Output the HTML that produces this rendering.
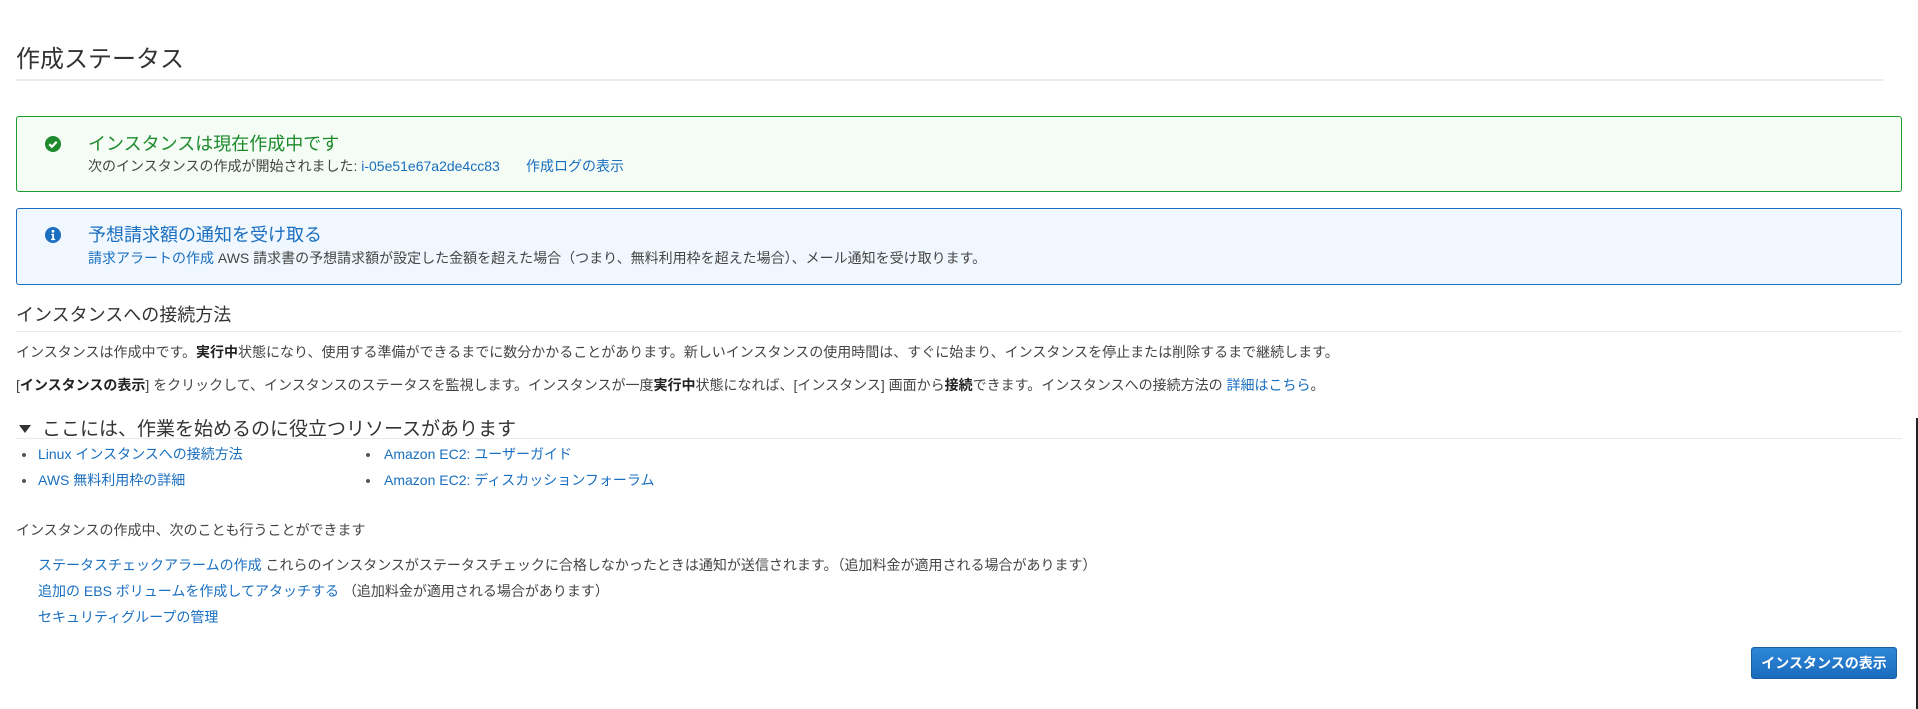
<!DOCTYPE html>
<html><head><meta charset="utf-8"><style>
*{margin:0;padding:0;box-sizing:border-box}
body{width:1918px;height:709px;background:#fff;position:relative;overflow:hidden;font-family:"Liberation Sans","Noto Sans CJK JP",sans-serif;color:#444;font-size:14px}
.a{position:absolute;white-space:nowrap;line-height:20px}
a,.l{color:#1a6fc0;text-decoration:none}
b{color:#222}
.hr{position:absolute;height:2px;background:#eaeaea}
.box{position:absolute;left:16px;width:1886px;border-radius:3px}
.bul{position:absolute;width:4px;height:4px;border-radius:2px;background:#555}
</style></head><body>
<div class="a" style="left:16px;top:45px;font-size:24px;line-height:30px;color:#333">作成ステータス</div>
<div class="hr" style="left:16px;top:79px;width:1867px"></div>

<div class="box" style="top:116px;height:76px;border:1px solid #1d9a2c;background:#f4fcf5"></div>
<svg class="a" style="left:45px;top:136px" width="16" height="16" viewBox="0 0 16 16"><circle cx="8" cy="8" r="8" fill="#1d8a2c"/><path d="M4.3 8.2l2.6 2.6 4.8-5" stroke="#fff" stroke-width="2.2" fill="none"/></svg>
<div class="a" style="left:88px;top:132px;font-size:18px;line-height:24px;color:#1d8a2c">インスタンスは現在作成中です</div>
<div class="a" style="left:88px;top:156px;color:#444">次のインスタンスの作成が開始されました: <span class="l">i-05e51e67a2de4cc83</span></div>
<div class="a l" style="left:526px;top:156px">作成ログの表示</div>

<div class="box" style="top:208px;height:77px;border:1px solid #1a6fc0;background:#f0f7fe"></div>
<svg class="a" style="left:45px;top:227px" width="16" height="16" viewBox="0 0 16 16"><circle cx="8" cy="8" r="8" fill="#1a6fc0"/><circle cx="8" cy="4.3" r="1.4" fill="#fff"/><path d="M6.2 6.8h2.8v5h1.2v1.3H6v-1.3h1.2V8.1H6.2z" fill="#fff"/></svg>
<div class="a l" style="left:88px;top:223px;font-size:18px;line-height:24px">予想請求額の通知を受け取る</div>
<div class="a" style="left:88px;top:248px;color:#444"><span class="l">請求アラートの作成</span> AWS 請求書の予想請求額が設定した金額を超えた場合（つまり、無料利用枠を超えた場合）、メール通知を受け取ります。</div>

<div class="a" style="left:16px;top:303px;font-size:18px;line-height:24px;color:#333">インスタンスへの接続方法</div>
<div class="hr" style="left:16px;top:331px;width:1886px;height:1px"></div>
<div class="a" style="left:16px;top:342px;color:#444">インスタンスは作成中です。<b>実行中</b>状態になり、使用する準備ができるまでに数分かかることがあります。新しいインスタンスの使用時間は、すぐに始まり、インスタンスを停止または削除するまで継続します。</div>
<div class="a" style="left:16px;top:375px;color:#444">[<b>インスタンスの表示</b>] をクリックして、インスタンスのステータスを監視します。インスタンスが一度<b>実行中</b>状態になれば、[インスタンス] 画面から<b>接続</b>できます。インスタンスへの接続方法の <span class="l">詳細はこちら</span>。</div>

<svg class="a" style="left:19px;top:425px" width="12" height="9"><path d="M0 0h12L6 8z" fill="#333"/></svg>
<div class="a" style="left:42px;top:417px;font-size:19px;line-height:26px;color:#333">ここには、作業を始めるのに役立つリソースがあります</div>
<div class="hr" style="left:16px;top:438px;width:1886px;height:1px"></div>
<div class="bul" style="left:22px;top:453px"></div><div class="a l" style="left:38px;top:444px">Linux インスタンスへの接続方法</div>
<div class="bul" style="left:22px;top:479px"></div><div class="a l" style="left:38px;top:470px">AWS 無料利用枠の詳細</div>
<div class="bul" style="left:366px;top:453px"></div><div class="a l" style="left:384px;top:444px">Amazon EC2: ユーザーガイド</div>
<div class="bul" style="left:366px;top:479px"></div><div class="a l" style="left:384px;top:470px">Amazon EC2: ディスカッションフォーラム</div>

<div class="a" style="left:16px;top:520px;color:#444">インスタンスの作成中、次のことも行うことができます</div>
<div class="a" style="left:38px;top:555px;color:#444"><span class="l">ステータスチェックアラームの作成</span> これらのインスタンスがステータスチェックに合格しなかったときは通知が送信されます。（追加料金が適用される場合があります）</div>
<div class="a" style="left:38px;top:581px;color:#444"><span class="l">追加の EBS ボリュームを作成してアタッチする</span> （追加料金が適用される場合があります）</div>
<div class="a l" style="left:38px;top:607px">セキュリティグループの管理</div>

<div class="a" style="left:1751px;top:647px;width:146px;height:32px;border-radius:3px;border:1px solid #1b5e9e;background:linear-gradient(#2d87d8,#1a6bbd);color:#fff;font-weight:bold;font-size:14px;line-height:30px;text-align:center">インスタンスの表示</div>
<div style="position:absolute;left:1916px;top:418px;width:2px;height:291px;background:#222"></div>
</body></html>
